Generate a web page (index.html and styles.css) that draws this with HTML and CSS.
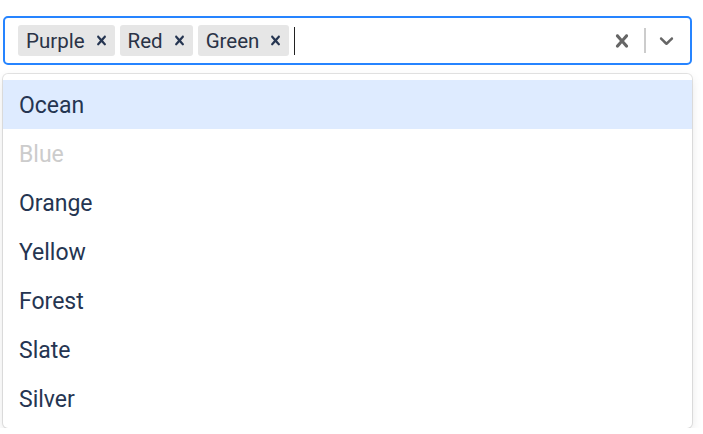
FILE: index.html
```html
<!DOCTYPE html>
<html>
<head>
<meta charset="utf-8">
<link rel="stylesheet" href="styles.css">
</head>
<body>
<div class="select">
  <div class="control">
    <div class="values">
      <div class="chip"><span class="chip-label">Purple</span><span class="chip-x"><svg width="19" height="19" viewBox="0 0 20 20"><path d="M14.348 14.849c-0.469 0.469-1.229 0.469-1.697 0l-2.651-3.030-2.651 3.029c-0.469 0.469-1.229 0.469-1.697 0-0.469-0.469-0.469-1.229 0-1.697l2.758-3.15-2.759-3.152c-0.469-0.469-0.469-1.228 0-1.697s1.228-0.469 1.697 0l2.652 3.031 2.651-3.031c0.469-0.469 1.228-0.469 1.697 0s0.469 1.229 0 1.697l-2.758 3.152 2.758 3.15c0.469 0.469 0.469 1.229 0 1.698z"/></svg></span></div>
      <div class="chip"><span class="chip-label">Red</span><span class="chip-x"><svg width="19" height="19" viewBox="0 0 20 20"><path d="M14.348 14.849c-0.469 0.469-1.229 0.469-1.697 0l-2.651-3.030-2.651 3.029c-0.469 0.469-1.229 0.469-1.697 0-0.469-0.469-0.469-1.229 0-1.697l2.758-3.15-2.759-3.152c-0.469-0.469-0.469-1.228 0-1.697s1.228-0.469 1.697 0l2.652 3.031 2.651-3.031c0.469-0.469 1.228-0.469 1.697 0s0.469 1.229 0 1.697l-2.758 3.152 2.758 3.15c0.469 0.469 0.469 1.229 0 1.698z"/></svg></span></div>
      <div class="chip"><span class="chip-label">Green</span><span class="chip-x"><svg width="19" height="19" viewBox="0 0 20 20"><path d="M14.348 14.849c-0.469 0.469-1.229 0.469-1.697 0l-2.651-3.030-2.651 3.029c-0.469 0.469-1.229 0.469-1.697 0-0.469-0.469-0.469-1.229 0-1.697l2.758-3.15-2.759-3.152c-0.469-0.469-0.469-1.228 0-1.697s1.228-0.469 1.697 0l2.652 3.031 2.651-3.031c0.469-0.469 1.228-0.469 1.697 0s0.469 1.229 0 1.697l-2.758 3.152 2.758 3.150c0.469 0.469 0.469 1.229 0 1.698z"/></svg></span></div>
      <span class="caret"></span>
    </div>
    <div class="indicators">
      <span class="ind clear"><svg width="26" height="26" viewBox="0 0 20 20"><path d="M14.348 14.849c-0.469 0.469-1.229 0.469-1.697 0l-2.651-3.030-2.651 3.029c-0.469 0.469-1.229 0.469-1.697 0-0.469-0.469-0.469-1.229 0-1.697l2.758-3.15-2.759-3.152c-0.469-0.469-0.469-1.228 0-1.697s1.228-0.469 1.697 0l2.652 3.031 2.651-3.031c0.469-0.469 1.228-0.469 1.697 0s0.469 1.229 0 1.697l-2.758 3.152 2.758 3.15c0.469 0.469 0.469 1.229 0 1.698z"/></svg></span>
      <span class="sep"></span>
      <span class="ind chevron"><svg width="23" height="23" viewBox="0 0 20 20"><path d="M4.516 7.548c0.436-0.446 1.043-0.481 1.576 0l3.908 3.747 3.908-3.747c0.533-0.481 1.141-0.446 1.574 0 0.436 0.445 0.408 1.197 0 1.615-0.406 0.418-4.695 4.502-4.695 4.502-0.217 0.223-0.502 0.335-0.787 0.335s-0.57-0.112-0.789-0.335c0 0-4.287-4.084-4.695-4.502s-0.436-1.170 0-1.615z"/></svg></span>
    </div>
  </div>
  <div class="menu">
    <div class="option focused">Ocean</div>
    <div class="option disabled">Blue</div>
    <div class="option">Orange</div>
    <div class="option">Yellow</div>
    <div class="option">Forest</div>
    <div class="option">Slate</div>
    <div class="option">Silver</div>
  </div>
</div>
</body>
</html>
```
FILE: styles.css
```css
html, body {
  margin: 0;
  padding: 0;
  background: #fff;
}
body {
  font-family: Roboto, "Liberation Sans", sans-serif;
  color: #253551;
}
.select {
  width: 689px;
  margin: 16px 0 0 3px;
}
.control {
  box-sizing: border-box;
  height: 49px;
  border: 2px solid #2684ff;
  border-radius: 5px;
  display: flex;
  align-items: center;
  padding-left: 13px;
}
.values {
  flex: 1;
  display: flex;
  align-items: center;
  gap: 5px;
}
.chip {
  display: flex;
  align-items: center;
  height: 31px;
  background: #e6e6e6;
  border-radius: 3px;
  font-size: 20.5px;
  color: #2a3346;
}
.chip-label {
  padding-left: 8px;
}
.chip-x {
  display: flex;
  align-items: center;
  height: 31px;
  padding: 0 4px 0 7px;
}
.chip-x svg {
  fill: #253551;
}
.caret {
  width: 1px;
  height: 28px;
  background: #222;
}
.indicators {
  display: flex;
  align-items: center;
  height: 100%;
}
.ind {
  display: flex;
}
.ind svg {
  fill: #666;
}
.clear {
  padding-right: 9px;
}
.sep {
  width: 2px;
  height: 25px;
  background: #ccc;
}
.chevron {
  padding: 0 12px 0 9px;
}
.menu {
  margin-top: 9px;
  border-radius: 5px;
  box-shadow: 0 0 0 1px rgba(0,0,0,0.1), 0 4px 11px rgba(0,0,0,0.1);
  padding: 6px 0 5px;
}
.option {
  box-sizing: border-box;
  height: 49px;
  display: flex;
  align-items: center;
  padding: 2px 0 0 16px;
  font-size: 23px;
}
.option.focused { background: #deebff; }
.option.disabled { color: #cccccc; }
```
